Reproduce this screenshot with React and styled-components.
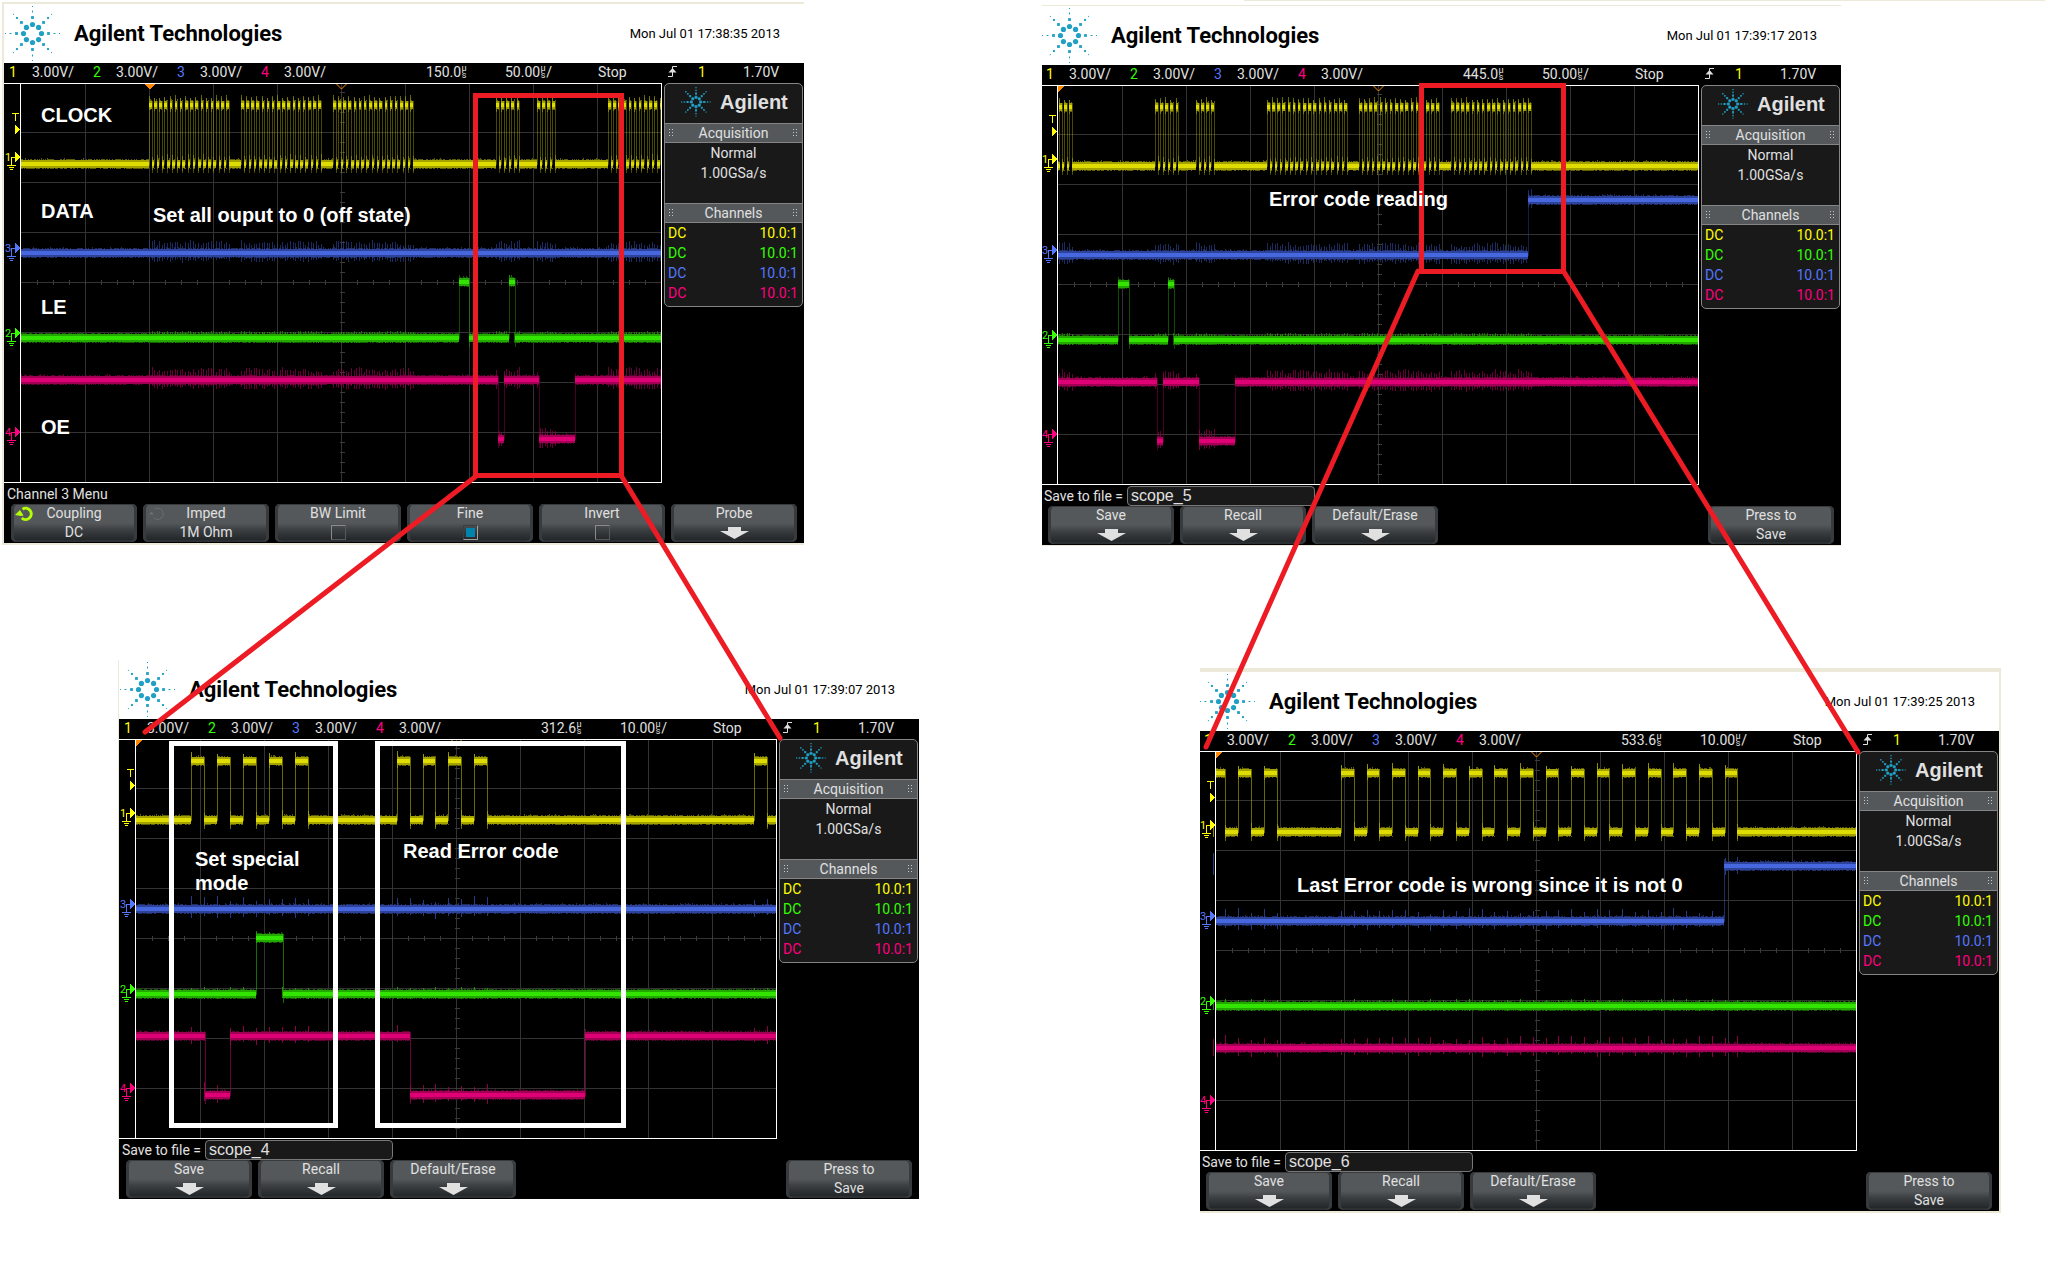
import React from "react";
import styled, { createGlobalStyle } from "styled-components";

const CHANNEL = {
  1: { text: "#ffff00", bright: "#dedc00", mid: "#a3a200", dim: "#5f5e00" },
  2: { text: "#33ff00", bright: "#33e400", mid: "#22a800", dim: "#115c00" },
  3: { text: "#5577ff", bright: "#4767df", mid: "#2d439a", dim: "#1f2c66" },
  4: { text: "#ff0080", bright: "#df0076", mid: "#a10055", dim: "#5c0031" },
};

const UI_FONT = `Roboto, "Liberation Sans", Arial, sans-serif`;

const GlobalStyle = createGlobalStyle`
  *, *::before, *::after { box-sizing: border-box; }
  body { margin: 0; background: #fff; font-family: "Liberation Sans", Arial, sans-serif; }
`;

/* ---------- page ---------- */

const Board = styled.main`
  position: relative;
  min-width: max-content;
  min-height: 100vh;
  background: #fff;
  overflow: hidden;
`;

const TopRule = styled.div`
  height: 1px;
  margin: 0 25px 1px 1244px;
  background: #ece9d8;
`;

const CaptureRow = styled.div`
  display: flex;
  align-items: flex-start;
  gap: ${(p) => p.$gap}px;
  padding-left: ${(p) => p.$indent}px;
  margin-bottom: 114px;
`;

const Frame = styled.article`
  display: flex;
  justify-content: flex-end;
  flex: none;
  box-sizing: content-box;
  width: ${(p) => p.$width}px;
  margin-top: ${(p) => p.$drop || 0}px;
  border: 0 solid #ece9d8;
  border-width: ${(p) => p.$edge};
  overflow: hidden;
`;

const Scope = styled.div`
  flex: none;
  width: 800px;
`;

const ScopeHeader = styled.header`
  display: flex;
  align-items: center;
  height: 59px;
  padding: 0 24px 0 0;
  background: #fff;
`;

const Brand = styled.h2`
  flex: 1;
  margin: 0;
  padding-left: 13px;
  color: #000;
  font: bold 22px/32px ${UI_FONT};
`;

const Stamp = styled.time`
  color: #000;
  font: 13px/32px ${UI_FONT};
`;

/* ---------- instrument screen ---------- */

const Screen = styled.section`
  display: flex;
  flex-direction: column;
  height: 480px;
  background: #000;
  color: #e0e0e0;
  font: 14px/20px ${UI_FONT};
`;

const StatusBar = styled.div`
  display: grid;
  grid-template-columns: repeat(4, 84px) 86px 79px 93px 69px 31px 45px 1fr;
  height: 20px;
  line-height: 18px;
  white-space: nowrap;
`;

const Readout = styled.div`
  display: grid;
  grid-template-columns: 23px 1fr;
  padding-left: 5px;
`;

const Tint = styled.span`
  color: ${(p) => CHANNEL[p.$ch].text};
`;

const Timing = styled.span`
  grid-column: ${(p) => p.$col || "auto"};
  display: inline-flex;
`;

const MicroUnit = styled.span`
  display: inline-flex;
  flex-direction: column;
  align-items: center;
  width: 6px;
  padding-top: 2px;
  font-size: 9px;
  line-height: 7px;
`;

const Body = styled.div`
  display: flex;
  flex: none;
  height: 400px;
`;

const Display = styled.svg`
  display: block;
  flex: none;
  width: 658px;
  height: 400px;
`;

const SidePanel = styled.aside`
  flex: 1;
  align-self: flex-start;
  height: 224px;
  margin: 0 1px 0 2px;
  border: 1px solid #858585;
  border-radius: 5px;
  background: #191919;
  overflow: hidden;
`;

const PanelBrand = styled.div`
  display: flex;
  align-items: center;
  gap: 9px;
  height: 39px;
  padding: 0 0 3px 16px;
  font: bold 20px/36px "Liberation Sans", Arial, sans-serif;
`;

const PanelTitle = styled.h3`
  display: flex;
  align-items: center;
  justify-content: space-between;
  height: 20px;
  margin: 0;
  padding: 0 4px;
  border: 1px solid #858585;
  border-width: 1px 0;
  background: #54585b;
  font-size: 14px;
  font-weight: normal;
  line-height: 18px;
`;

const PanelText = styled.p`
  height: 60px;
  margin: 0;
  text-align: center;
  white-space: pre-line;
`;

const ChannelTable = styled.table`
  width: 100%;
  border-collapse: collapse;
`;

const ChannelRow = styled.tr`
  color: ${(p) => CHANNEL[p.$ch].text};
`;

const Coupling = styled.td`
  padding: 0 0 0 3px;
  line-height: 20px;
`;

const Ratio = styled.td`
  padding: 0 4px 0 0;
  line-height: 20px;
  text-align: right;
`;

const MessageLine = styled.div`
  display: flex;
  align-items: center;
  gap: 4px;
  height: 21px;
  padding: 0 3px;
`;

const FileLabel = styled.label`
  white-space: nowrap;
`;

const FileInput = styled.input`
  width: 188px;
  height: 20px;
  padding: 0 3px;
  border: 1px solid #777;
  border-radius: 4px;
  background: #191919;
  color: #e0e0e0;
  font: 16px/18px "Liberation Sans", Arial, sans-serif;
  outline: none;
`;

const Softkeys = styled.div`
  display: grid;
  grid-template-columns: repeat(6, 1fr);
  gap: 6px;
  padding: 0 7px;
`;

const softkeyFace = `
  position: relative;
  display: flex;
  flex-direction: column;
  align-items: center;
  height: 38px;
  margin: 0;
  padding: 0;
  border: 0;
  border-radius: 5px;
  box-shadow: inset 3px 0 0 #373b3e, inset -3px 0 0 #373b3e, inset 0 1px 0 #373b3e, inset 0 -2px 0 #2c3033;
  background: linear-gradient(#54585b 0%, #54585b 50%, #3b3f42 68%, #1f2224 100%);
  color: #e0e0e0;
  font: 14px/19px ${UI_FONT};
`;

const Softkey = styled.button`
  ${softkeyFace}
  grid-column: ${(p) => p.$col || "auto"};
`;

const SoftkeyToggle = styled.label`
  ${softkeyFace}
`;

const Tick = styled.input`
  appearance: none;
  width: 15px;
  height: 15px;
  margin: 2px 0 0;
  border: 1px solid;
  border-color: #8a8a8a #55595c #55595c #8a8a8a;

  &:checked {
    border-color: #3a3e41 #a0a0a0 #a0a0a0 #3a3e41;
    background: #0083ad content-box;
    padding: 2px;
  }
`;

const KnobMark = styled.svg`
  position: absolute;
  left: 4px;
  top: 2px;
`;

const ArrowMark = styled.svg`
  display: block;
  margin-top: 4px;
`;

/* ---------- notes drawn over the captures ---------- */

const Note = styled.p`
  position: absolute;
  left: ${(p) => p.$x}px;
  top: ${(p) => p.$y}px;
  margin: 0;
  color: #fff;
  font: bold 20px/24px "Liberation Sans", Arial, sans-serif;
  white-space: pre;
`;

const Highlight = styled.div`
  position: absolute;
  left: ${(p) => p.$x}px;
  top: ${(p) => p.$y}px;
  width: ${(p) => p.$w}px;
  height: ${(p) => p.$h}px;
  border: 5px solid ${(p) => p.$color};
`;

const Connectors = styled.svg`
  position: absolute;
  left: 0;
  top: 0;
  pointer-events: none;
`;

/* ---------- drawings ---------- */

function Spark({ size }) {
  const arms = [0, 1, 2, 3, 4, 5, 6, 7];
  const small = size < 40;
  return (
    <svg
      width={size}
      height={size}
      viewBox="-28.5 -28.5 57 57"
      fill="#20a0c4"
      stroke="#20a0c4"
      strokeWidth={small ? 1 : 0}
      aria-hidden="true"
    >
      {arms.map((i) => {
        const diagonal = i % 2 === 1;
        const a = (i * Math.PI) / 4;
        const at = (r) => [Math.cos(a) * r, Math.sin(a) * r];
        const [x1, y1] = at(diagonal ? 8.6 : 9);
        const [x2, y2] = at(diagonal ? 15.6 : 16);
        const [x3, y3] = at(22);
        const [x4, y4] = at(27);
        const w = i % 4 === 0 || diagonal ? 2 : 1;
        const h = i % 4 === 2 || diagonal ? 2 : 1;
        return (
          <g key={i}>
            <circle cx={x1} cy={y1} r="2.6" />
            <rect x={x2 - 1.4} y={y2 - 1.4} width="2.8" height="2.8" />
            <rect x={x3 - w / 2} y={y3 - h / 2} width={w} height={h} />
            <rect x={x4 - 0.5} y={y4 - 0.5} width="1" height="1" />
          </g>
        );
      })}
    </svg>
  );
}

function Grip() {
  return (
    <svg width="5" height="8" fill="#c8c8c8" shapeRendering="crispEdges" aria-hidden="true">
      {[0, 3, 6].map((y) => [0, 3].map((x) => <rect key={x + "-" + y} x={x} y={y} width="1" height="1" />))}
    </svg>
  );
}

function DownArrow() {
  return (
    <ArrowMark width="29" height="12" fill="#e0e0e0" aria-hidden="true">
      <path d="M8 0H21V4H29L14.5 12L0 4H8Z" />
    </ArrowMark>
  );
}

function Knob({ active }) {
  const c = active ? "#b4ff00" : "#6c6f71";
  return (
    <KnobMark width="20" height="18" aria-hidden="true">
      <path
        d="M7.500 3.200A5.600 5.600 0 1 1 6.800 12"
        fill="none"
        stroke={c}
        strokeWidth={active ? 3 : 1}
      />
      <path d={active ? "M0 9L5 4L8.500 9.500L6 10Z" : "M1.500 8.500L4.500 5.500L7 8.500Z"} fill={c} />
    </KnobMark>
  );
}

function EdgeIcon() {
  return (
    <svg width="11" height="15" fill="none" stroke="#e0e0e0" aria-hidden="true">
      <path d="M1 13.500H5.500V3.500H10" />
      <path d="M1.500 9.500L5.500 5L9.500 9.500Z" fill="#e0e0e0" stroke="none" />
    </svg>
  );
}

/* ---------- waveforms ---------- */

const noise = (n) => {
  const v = Math.sin(n * 12.9898 + 4.1) * 43758.5453;
  return v - Math.floor(v);
};

const SPAN = 640;

function burst(start, count, period) {
  return Array.from({ length: count }, (_, i) => [start + i * period, start + i * period + period / 2]);
}

/* Splits a line into level segments: `pulses` are the stretches spent at `away`. */
function levels(pulses, rest, away) {
  const out = [];
  let x = 0;
  pulses.forEach(([a, b]) => {
    if (a > x) out.push([x, a, rest]);
    out.push([Math.max(a, 0), Math.min(b, SPAN), away]);
    x = b;
  });
  if (x < SPAN) out.push([x, SPAN, rest]);
  return out;
}

function Trace({ ch, segments, spikes, reach, slow }) {
  const c = CHANNEL[ch];
  let mid = "";
  let bright = "";
  let dim = "";
  let edges = "";
  let spurs = "";
  const bar = (x, y, w, h) => `M${x} ${y}h${w}v${h}h${-w}z`;
  const levelAt = (x) => {
    const s = segments.find(([a, b]) => x >= a && x < b);
    return s ? s[2] : segments[segments.length - 1][2];
  };
  segments.forEach(([a, b, y], i) => {
    const x0 = Math.round(a);
    const w = Math.max(Math.round(b) - x0, 2);
    mid += bar(x0, y - 3, w, 8);
    bright += bar(x0, y - 1, w, 4);
    const next = segments[i + 1];
    if (next) {
      const top = Math.min(y, next[2]);
      const bottom = Math.max(y, next[2]);
      const fall = next[2] > y;
      edges += bar(Math.round(b), top - (fall ? 3 : 6), 1, bottom - top + (fall ? 13 : 8));
    }
  });
  for (let x = 0; x < SPAN; x += 1) {
    const y = levelAt(x);
    if (noise(x + ch * 700) > 0.45) dim += bar(x, y - 4, 1, 1);
    if (noise(x + ch * 900) > 0.4) dim += bar(x, y + 5, 1, 1);
    if (noise(x + ch * 1300) > 0.93) dim += bar(x, y - 5, 1, 2);
  }
  spikes.forEach((s, i) => {
    const x = Math.round(s);
    if (x >= SPAN) return;
    const y = levelAt(x + 1);
    const up = 4 + Math.round(reach * (0.3 + noise(i + ch * 31) * 0.7));
    const down = 5 + Math.round(reach * (0.2 + noise(i + ch * 53) * 0.5));
    spurs += bar(x, y - up, 1, up + down);
  });
  return (
    <g>
      <path d={edges} fill={c.mid} opacity={slow ? 0.65 : 0.45} />
      <path d={dim} fill={c.dim} />
      <path d={spurs} fill={c.mid} opacity={slow ? 0.85 : 0.62} />
      <path d={mid} fill={c.mid} />
      <path d={bright} fill={c.bright} />
    </g>
  );
}

const MARKS = [
  [1, 74],
  [2, 250],
  [3, 165],
  [4, 349],
];

/* Plot origin sits 17px right of the screen edge, one pixel under the top rule. */
function Plot({ wave, trigger }) {
  const clock = wave.clock;
  const edges = clock.flat();
  const minor = [];
  for (let x = 16; x < SPAN; x += 16) minor.push(`M${x} 197v5`);
  for (let y = 9; y < 399; y += 10) minor.push(`M318 ${y + 0.5}h5`);
  const grid = [];
  for (let k = 1; k < 10; k += 1) grid.push(`M${k * 64 + 0.5} 1V399`);
  for (let k = 1; k < 8; k += 1) grid.push(`M0 ${k * 50 - 0.5}H640`);
  return (
    <Display viewBox="-17 0 658 400" shapeRendering="crispEdges" role="img" aria-label="Oscilloscope traces">
      <path d={grid.join("")} stroke="#333" />
      <path d={minor.join("")} stroke="#3c3c3c" transform="translate(0.5 0)" />
      <Trace ch={4} segments={levels(wave.oe, 296, 355)} spikes={edges} reach={8} slow={wave.slow} />
      <Trace ch={2} segments={levels(wave.le, 254, 198)} spikes={edges} reach={2} slow={wave.slow} />
      <Trace ch={3} segments={levels(wave.data, 169, 114)} spikes={edges} reach={8} slow={wave.slow} />
      <Trace ch={1} segments={levels(clock, 80, 21)} spikes={edges} reach={5} slow={wave.slow} />
      <path d="M-17 0.5H641M-17 399.500H641M-0.500 0V400M640.500 0V400" stroke="#fff" />
      {trigger > 0 ? (
        <path d={`M${trigger - 5} 1h11l-5.500 5.500z`} fill="#ff8800" />
      ) : (
        <path d="M0 1h6l-6 6z" fill="#ff8800" />
      )}
      <path d="M315.500 1l5 5l5-5" fill="none" stroke="#ff8800" shapeRendering="auto" />
      <g fill={CHANNEL[1].text}>
        <path d="M-9 30h7v1h-3v7h-1v-7h-3z" />
        <path d="M-6 42l5 4.500l-5 4.500z" />
      </g>
      {MARKS.map(([ch, y]) => (
        <g key={ch} fill={CHANNEL[ch].text} transform={`translate(0 ${y})`}>
          <text x="-16" y="4" fontSize="11" fontFamily={UI_FONT}>
            {ch}
          </text>
          <path d="M-6 -5l5 5l-5 5zM-10 0h5v1h-4v8h-1zM-14 8h9v1h-9zM-12 10h5v1h-5zM-11 12h3v1h-3z" />
        </g>
      ))}
    </Display>
  );
}

function ArrowKey({ children }) {
  return (
    <Softkey type="button">
      {children}
      <DownArrow />
    </Softkey>
  );
}

function Micro() {
  return (
    <MicroUnit>
      <span>µ</span>
      <span>s</span>
    </MicroUnit>
  );
}

function Capture({ stamp, delay, timebase, wave, trigger, file, frame }) {
  return (
    <Frame {...frame}>
      <Scope>
        <ScopeHeader>
          <Spark size={57} />
          <Brand>Agilent Technologies</Brand>
          <Stamp>{stamp}</Stamp>
        </ScopeHeader>
        <Screen>
          <StatusBar>
            {[1, 2, 3, 4].map((ch) => (
              <Readout key={ch}>
                <Tint $ch={ch}>{ch}</Tint>
                <span>3.00V/</span>
              </Readout>
            ))}
            <Timing $col={6}>
              {delay}
              <Micro />
            </Timing>
            <Timing>
              {timebase}
              <Micro />/
            </Timing>
            <span>Stop</span>
            <EdgeIcon />
            <Tint $ch={1}>1</Tint>
            <span>1.70V</span>
          </StatusBar>
          <Body>
            <Plot wave={wave} trigger={trigger} />
            <SidePanel>
              <PanelBrand>
                <Spark size={30} />
                Agilent
              </PanelBrand>
              <PanelTitle>
                <Grip />
                Acquisition
                <Grip />
              </PanelTitle>
              <PanelText>{"Normal\n1.00GSa/s"}</PanelText>
              <PanelTitle>
                <Grip />
                Channels
                <Grip />
              </PanelTitle>
              <ChannelTable>
                <tbody>
                  {[1, 2, 3, 4].map((ch) => (
                    <ChannelRow key={ch} $ch={ch}>
                      <Coupling>DC</Coupling>
                      <Ratio>10.0:1</Ratio>
                    </ChannelRow>
                  ))}
                </tbody>
              </ChannelTable>
            </SidePanel>
          </Body>
          {file ? (
            <>
              <MessageLine>
                <FileLabel htmlFor={file}>Save to file =</FileLabel>
                <FileInput id={file} defaultValue={file} />
              </MessageLine>
              <Softkeys>
                <ArrowKey>Save</ArrowKey>
                <ArrowKey>Recall</ArrowKey>
                <ArrowKey>Default/Erase</ArrowKey>
                <Softkey type="button" $col={6}>
                  <span>Press to</span>
                  <span>Save</span>
                </Softkey>
              </Softkeys>
            </>
          ) : (
            <>
              <MessageLine>Channel 3 Menu</MessageLine>
              <Softkeys>
                <Softkey type="button">
                  <Knob active />
                  <span>Coupling</span>
                  <span>DC</span>
                </Softkey>
                <Softkey type="button">
                  <Knob />
                  <span>Imped</span>
                  <span>1M Ohm</span>
                </Softkey>
                <SoftkeyToggle>
                  BW Limit
                  <Tick type="checkbox" />
                </SoftkeyToggle>
                <SoftkeyToggle>
                  Fine
                  <Tick type="checkbox" defaultChecked />
                </SoftkeyToggle>
                <SoftkeyToggle>
                  Invert
                  <Tick type="checkbox" />
                </SoftkeyToggle>
                <ArrowKey>Probe</ArrowKey>
              </Softkeys>
            </>
          )}
        </Screen>
      </Scope>
    </Frame>
  );
}

/* ---------- data ---------- */

const FAST = 5.15;

const WAVES = {
  off: {
    clock: [
      ...burst(128, 16, FAST),
      ...burst(220, 16, FAST),
      ...burst(312, 16, FAST),
      ...burst(475, 5, FAST),
      ...burst(516, 4, FAST),
      ...burst(587, 11, FAST),
    ],
    data: [],
    le: [[438, 448], [488, 494]],
    oe: [[477, 483], [518, 554]],
  },
  reading: {
    clock: [
      ...burst(1, 3, FAST),
      ...burst(97, 5, FAST),
      ...burst(138, 4, FAST),
      ...burst(209, 16, FAST),
      ...burst(301, 16, FAST),
      ...burst(393, 16, FAST),
    ],
    data: [[470, 641]],
    le: [[60, 71], [110, 116]],
    oe: [[99, 105], [141, 177]],
  },
  special: {
    slow: true,
    clock: [...burst(55, 5, 26), ...burst(261, 4, 25.6), [618, 631]],
    data: [],
    le: [[120, 147]],
    oe: [[69, 94], [274, 449]],
  },
  last: {
    slow: true,
    clock: [[-3, 9], [22, 35], [48, 61], ...burst(125, 16, 25.57)],
    data: [[508, 641]],
    le: [],
    oe: [],
  },
};

const RED = "#ed1c24";

export default function App() {
  return (
    <Board>
      <GlobalStyle />
      <TopRule />
      <CaptureRow $gap={238} $indent={2}>
        <Capture
          stamp="Mon Jul 01 17:38:35 2013"
          delay="150.0"
          timebase="50.00"
          wave={WAVES.off}
          trigger={128}
          frame={{ $width: 800, $edge: "2px 0 2px 2px" }}
        />
        <Capture
          stamp="Mon Jul 01 17:39:17 2013"
          delay="445.0"
          timebase="50.00"
          wave={WAVES.reading}
          trigger={0}
          file="scope_5"
          frame={{ $width: 799, $edge: "1px 0 1px 0", $drop: 3 }}
        />
      </CaptureRow>
      <CaptureRow $gap={281} $indent={118}>
        <Capture
          stamp="Mon Jul 01 17:39:07 2013"
          delay="312.6"
          timebase="10.00"
          wave={WAVES.special}
          trigger={0}
          file="scope_4"
          frame={{ $width: 800, $edge: "0 0 0 1px" }}
        />
        <Capture
          stamp="Mon Jul 01 17:39:25 2013"
          delay="533.6"
          timebase="10.00"
          wave={WAVES.last}
          trigger={0}
          file="scope_6"
          frame={{ $width: 799, $edge: "4px 2px 2px 0", $drop: 8 }}
        />
      </CaptureRow>

      <Highlight $x={169} $y={741} $w={169} $h={387} $color="#fff" />
      <Highlight $x={375} $y={741} $w={251} $h={387} $color="#fff" />
      <Highlight $x={473} $y={93} $w={151} $h={385} $color={RED} />
      <Highlight $x={1419} $y={83} $w={147} $h={191} $color={RED} />
      <Connectors width="2070" height="1276" stroke={RED} strokeWidth="5" strokeLinecap="round" aria-hidden="true">
        <path d="M475 477L145 732" />
        <path d="M622 477L780 738" />
        <path d="M1418 271L1206 747" />
        <path d="M1564 272L1858 752" />
      </Connectors>

      <Note $x={41} $y={103}>CLOCK</Note>
      <Note $x={41} $y={199}>DATA</Note>
      <Note $x={41} $y={295}>LE</Note>
      <Note $x={41} $y={415}>OE</Note>
      <Note $x={153} $y={203}>Set all ouput to 0 (off state)</Note>
      <Note $x={1269} $y={187}>Error code reading</Note>
      <Note $x={195} $y={847}>{"Set special\nmode"}</Note>
      <Note $x={403} $y={839}>Read Error code</Note>
      <Note $x={1297} $y={873}>Last Error code is wrong since it is not 0</Note>
    </Board>
  );
}
